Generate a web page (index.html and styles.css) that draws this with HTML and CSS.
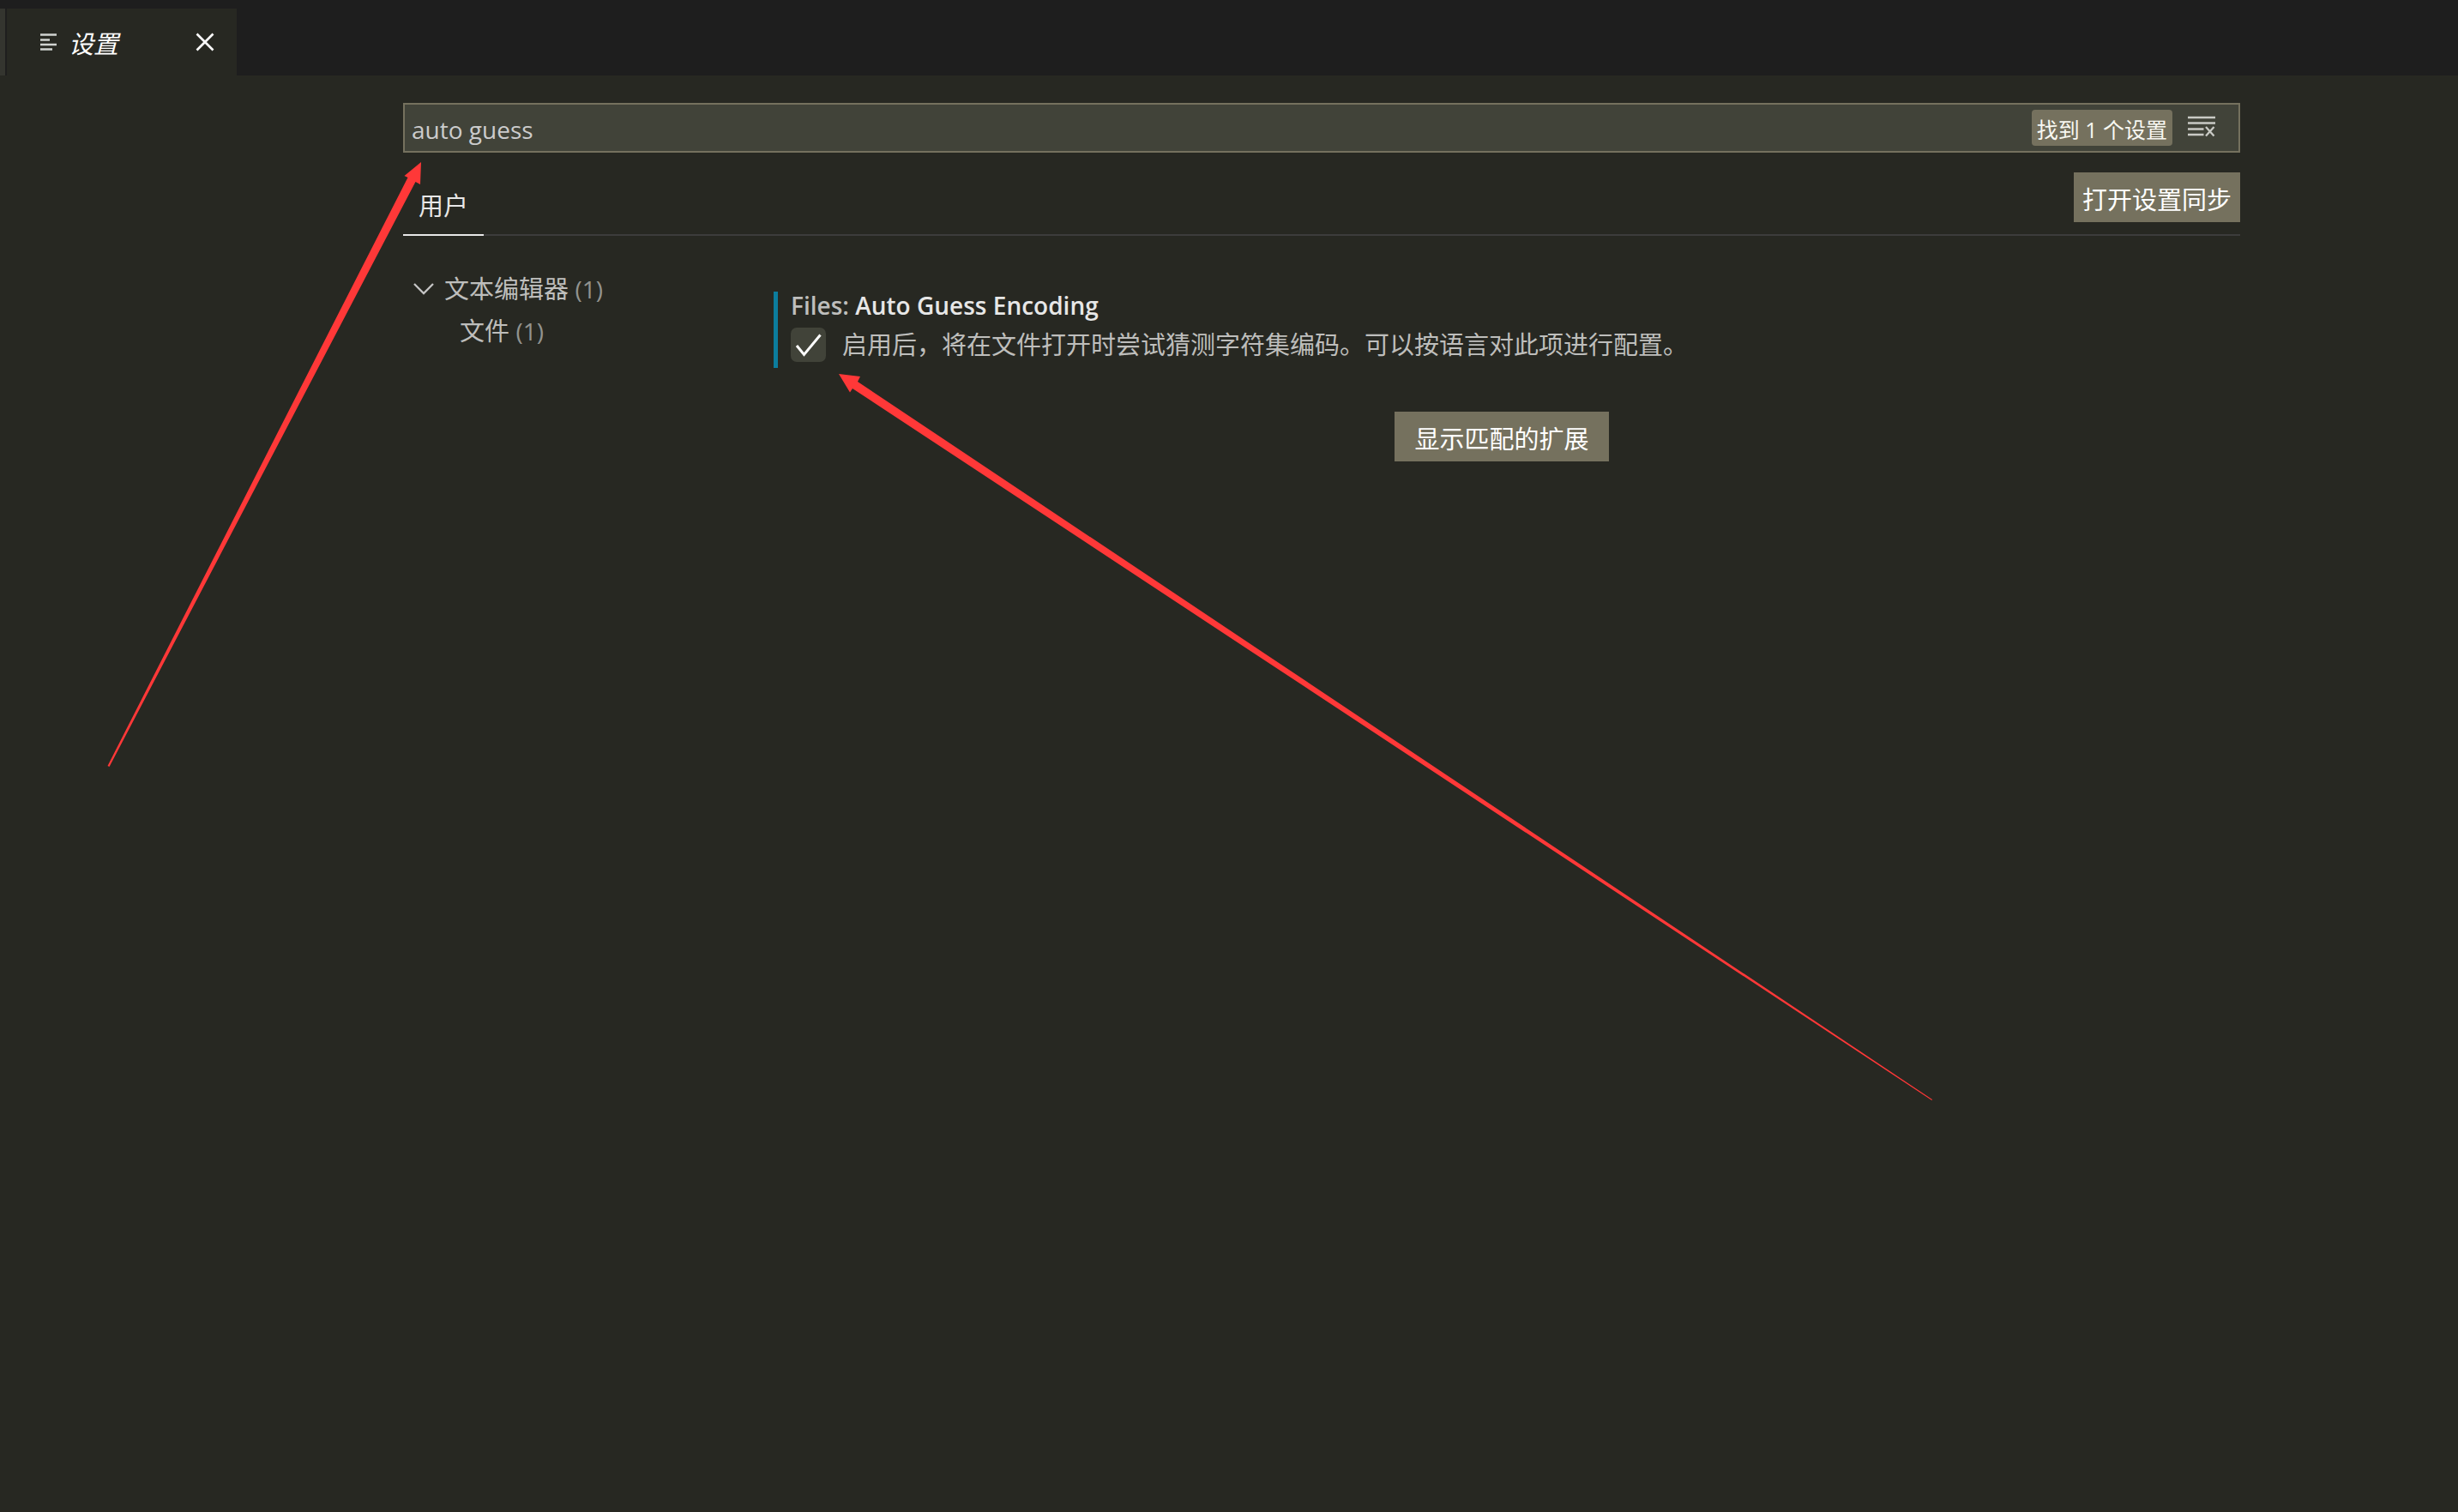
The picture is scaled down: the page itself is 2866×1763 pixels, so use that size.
FILE: index.html
```html
<!DOCTYPE html>
<html lang="zh-CN">
<head>
<meta charset="utf-8">
<title>设置</title>
<link rel="stylesheet" href="styles.css">
</head>
<body>
<header class="tab-bar">
  <div class="tab-sliver"></div>
  <div class="tab">
    <svg class="tab-icon" width="20" height="20" viewBox="0 0 20 20" aria-hidden="true"><path d="M0 1.5h19M0 7.500h11M0 13h19M0 18.500h14" stroke="#d0d2d0" stroke-width="2.600" fill="none"/></svg>
    <span class="tab-label">设置</span>
    <button class="icon-button" type="button" aria-label="关闭"><svg width="22" height="22" viewBox="0 0 22 22"><path d="M1.500 1.500l19 19M20.500 1.500l-19 19" stroke="#fff" stroke-width="2.600" fill="none"/></svg></button>
  </div>
</header>
<main class="settings">
  <div class="search">
    <input class="search-input" type="text" value="auto guess" aria-label="搜索设置">
    <span class="count-badge">找到 1 个设置</span>
    <button class="icon-button" type="button" aria-label="清除搜索"><svg width="34" height="30" viewBox="0 0 34 30"><path d="M1 3h32M1 9.500h32M1 16.500h18.500M1 23h18.500M22 14l9.500 10.500M31.500 14l-9.500 10.500" stroke="#c9cac5" stroke-width="2.300" fill="none"/></svg></button>
  </div>
  <div class="scope-bar">
    <button class="scope-tab" type="button">用户</button>
    <button class="button sync-button" type="button">打开设置同步</button>
  </div>
  <div class="columns">
    <nav class="toc">
      <a class="toc-row" href="#editor"><svg width="26" height="16" viewBox="0 0 26 16" aria-hidden="true"><path d="M2 2l11 11L24 2" stroke="#c5c5c5" stroke-width="2.300" fill="none"/></svg><span>文本编辑器 <span class="toc-count">(1)</span></span></a>
      <a class="toc-row toc-child" href="#files"><span>文件 <span class="toc-count">(1)</span></span></a>
    </nav>
    <section class="results">
      <article class="setting" id="files">
        <h2 class="setting-title"><span class="setting-category">Files:</span> Auto Guess Encoding</h2>
        <div class="setting-row">
          <span class="check">
            <input class="check-input" type="checkbox" id="auto-guess" checked>
            <svg class="check-mark" width="41" height="40" viewBox="0 0 41 40" aria-hidden="true"><path d="M7 21l8.500 10.500L34.500 8.500" stroke="#fff" stroke-width="3" fill="none"/></svg>
          </span>
          <label for="auto-guess">启用后，将在文件打开时尝试猜测字符集编码。可以按语言对此项进行配置。</label>
        </div>
      </article>
      <button class="button extensions-button" type="button">显示匹配的扩展</button>
    </section>
  </div>
</main>
<svg class="arrows" width="2260" height="1290" viewBox="0 0 2260 1290" aria-hidden="true">
  <path fill="#ff3838" d="M491 189L471.500 205L475.500 207L125.500 893L127.500 894L484.500 212L490 215Z"/>
  <path fill="#ff3838" d="M978 436L1003 439L1000 445L2253 1282L2252.500 1283L994 453L991 457.500Z"/>
</svg>
</body>
</html>
```
FILE: styles.css
```css
* {
  box-sizing: border-box;
}

body {
  margin: 0;
  position: relative;
  min-height: 100vh;
  background: #272822;
  color: #bebebc;
  font: 29px/40px "Open Sans", "Noto Sans CJK SC", sans-serif;
}

button {
  margin: 0;
  padding: 0;
  border: 0;
  background: none;
  color: #fff;
  font: inherit;
}

.tab-bar {
  display: flex;
  gap: 2px;
  height: 88px;
  padding-top: 10px;
  background: #1e1e1e;
}

.tab-sliver {
  width: 6px;
  background: #34352f;
}

.tab {
  display: flex;
  align-items: center;
  width: 268px;
  padding: 0 26px 0 39px;
  background: #272822;
}

.tab-label {
  flex: 1;
  margin-left: 13px;
  padding-top: 4px;
  color: #fff;
  font-style: italic;
}

.icon-button {
  display: flex;
}

.settings {
  padding: 32px 254px 0 470px;
}

.search {
  display: flex;
  align-items: center;
  height: 58px;
  padding-right: 26px;
  border: 2px solid #75715e;
  background: #414339;
}

.search-input {
  flex: 1;
  min-width: 0;
  height: 54px;
  padding: 4px 0 0 8px;
  border: 0;
  outline: 0;
  background: none;
  color: #ccc;
  font: 28px/40px "Open Sans", "Noto Sans CJK SC", sans-serif;
}

.count-badge {
  height: 42px;
  margin-right: 17px;
  padding: 0 6px;
  border-radius: 4px;
  background: #75715e;
  color: #f8f8f2;
  font-size: 25px;
  line-height: 46px;
}

.scope-bar {
  display: flex;
  justify-content: space-between;
  height: 97px;
  border-bottom: 2px solid #3c3c3c;
}

.scope-tab {
  height: 97px;
  padding: 28px 18px 0;
  border-bottom: 2px solid #e7e7e7;
  color: #e7e7e7;
}

.button {
  height: 58px;
  padding: 6px 23px 0;
  background: #75715e;
}

.sync-button {
  margin-top: 23px;
  padding: 6px 10px 0;
}

.columns {
  display: flex;
}

.toc {
  width: 420px;
  padding-top: 37px;
}

.toc-row {
  display: flex;
  align-items: center;
  gap: 11px;
  height: 49px;
  padding-left: 11px;
  color: inherit;
  text-decoration: none;
}

.toc-child {
  padding-left: 66px;
}

.toc-count {
  color: #92938f;
  font-size: 28px;
}

.results {
  flex: 1;
  display: flex;
  flex-direction: column;
  align-items: center;
  gap: 51px;
  padding: 65px 0 0 12px;
}

.setting {
  align-self: stretch;
  height: 89px;
  padding-left: 15px;
  border-left: 5px solid #0c7d9d;
}

.setting-title {
  margin: 0;
  color: #e7e7e7;
  font-size: 28px;
  font-weight: 600;
  line-height: 32px;
}

.setting-category {
  color: #bebebc;
}

.setting-row {
  display: flex;
  gap: 19px;
  margin-top: 10px;
}

.check {
  display: grid;
}

.check-input,
.check-mark {
  grid-area: 1 / 1;
}

.check-input {
  appearance: none;
  width: 41px;
  height: 40px;
  margin: 0;
  border-radius: 7px;
  background: #414339;
}

.check-mark {
  pointer-events: none;
}

.extensions-button {
  margin-right: 12px;
}

.arrows {
  position: absolute;
  top: 0;
  left: 0;
  pointer-events: none;
}
```
